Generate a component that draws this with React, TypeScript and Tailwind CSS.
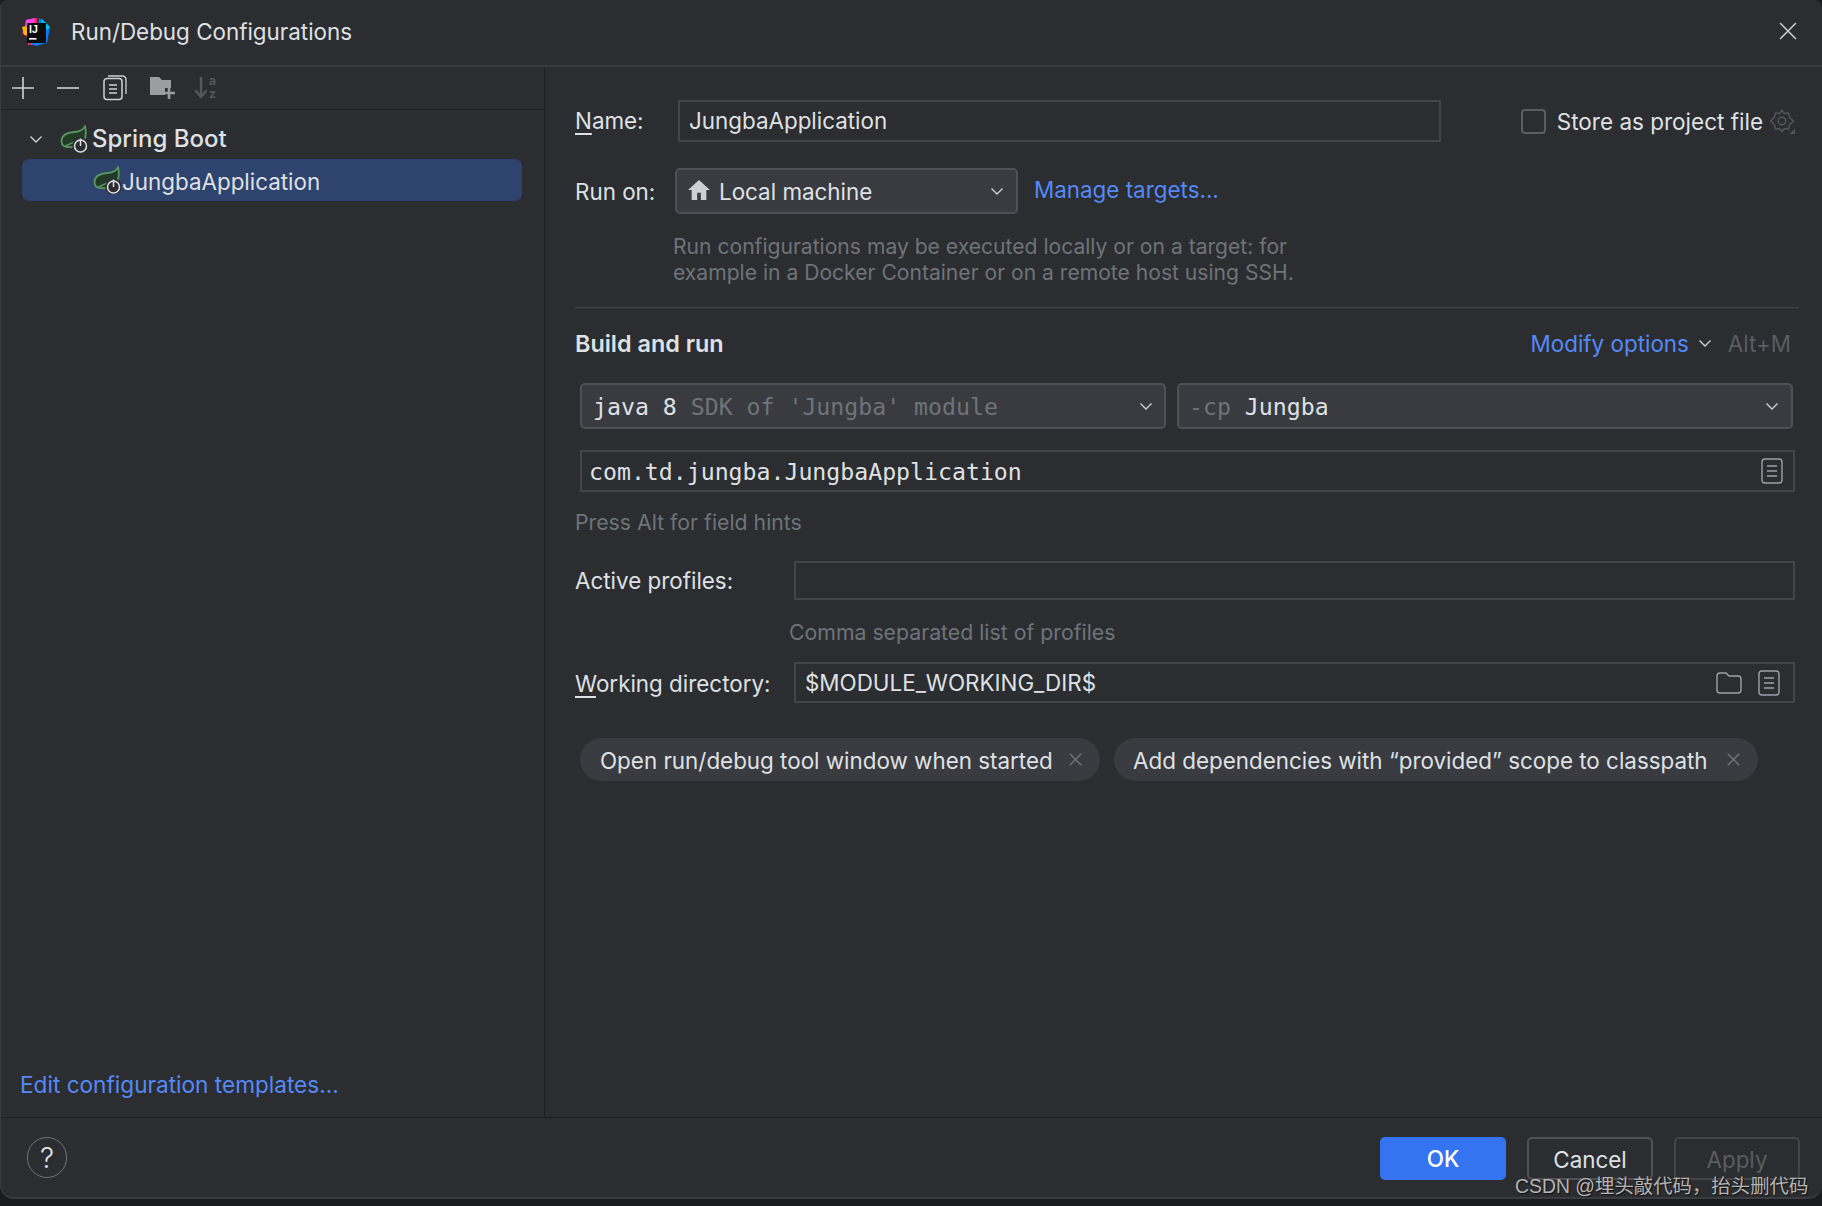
import React from 'react'

const uiFont = "font-['Inter','Liberation_Sans',sans-serif]"
const monoFont = "font-['DejaVu_Sans_Mono','Liberation_Mono',monospace]"

function Logo() {
  return (
    <svg width="30" height="32" viewBox="0 0 30 32" className="shrink-0">
      <polygon points="5,3 16,1 16,28 7,28 6,20 1,16 4,11" fill="#fe2857" />
      <polygon points="1,10 8,8 8,18 3,18" fill="#ffb300" />
      <polygon points="5,3 14,1 12,9 4,10" fill="#ff45ed" />
      <polygon points="18,1 29,10 26,26 15,29 8,26 16,16" fill="#087cfa" />
      <polygon points="20,1 29,10 24,14" fill="#07c3f2" />
      <rect x="6" y="6" width="19" height="20" fill="#0d0d0d" />
      <text x="8" y="16" fontSize="10.5" fontWeight="700" fill="#fff" fontFamily="Liberation Sans, sans-serif">IJ</text>
      <rect x="8" y="21" width="7.5" height="1.6" fill="#fff" />
    </svg>
  )
}

function SpringIcon() {
  return (
    <svg width="28" height="28" viewBox="0 0 28 28" fill="none" className="shrink-0">
      <path d="M25 1C23.5 5 20.5 6.5 14.5 7C7 7.6 1.5 10.5 1.5 16C1.5 19.5 4 21.8 7.5 22.2L15 22.2L25 14C26 9.5 26 5 25 1Z" fill="#233a27" stroke="#57965c" strokeWidth="1.8" strokeLinejoin="round" />
      <path d="M5 21.5C9 19 13 17.5 17 16" stroke="#57965c" strokeWidth="1.5" />
      <circle cx="20.5" cy="20.5" r="8.2" fill="#2b2d30" />
      <circle cx="20.5" cy="21" r="6" stroke="#dfe1e5" strokeWidth="1.5" />
      <path d="M20.5 13.5V21" stroke="#dfe1e5" strokeWidth="1.5" />
    </svg>
  )
}

function Chevron({ size = 16, color = '#ced0d6' }: { size?: number; color?: string }) {
  return (
    <svg width={size} height={size} viewBox="0 0 16 16" fill="none" className="shrink-0">
      <path d="M2.5 5.5L8 11L13.5 5.5" stroke={color} strokeWidth="1.4" />
    </svg>
  )
}

function DocIcon() {
  return (
    <svg width="22" height="26" viewBox="0 0 22 26" fill="none" className="shrink-0">
      <rect x="1" y="1" width="20" height="24" rx="3" stroke="#9da0a8" strokeWidth="1.4" />
      <path d="M6 8H16M6 13H16M6 18H16" stroke="#9da0a8" strokeWidth="1.6" />
    </svg>
  )
}

function CloseX({ size = 12, color = '#6f737a' }: { size?: number; color?: string }) {
  return (
    <svg width={size} height={size} viewBox="0 0 12 12" fill="none" className="shrink-0">
      <path d="M0.7 0.7L11.3 11.3M11.3 0.7L0.7 11.3" stroke={color} strokeWidth={size > 14 ? 1 : 1.3} />
    </svg>
  )
}

function Toolbar() {
  return (
    <div className="flex items-center h-[43px] border-b border-[#1e1f22]">
      <div className="w-[44px] flex justify-center">
        <svg width="24" height="24" viewBox="0 0 24 24" fill="none">
          <path d="M12 1V23M1 12H23" stroke="#ced0d6" strokeWidth="1.6" />
        </svg>
      </div>
      <div className="w-[46px] flex justify-center">
        <svg width="24" height="24" viewBox="0 0 24 24" fill="none">
          <path d="M1 12H23" stroke="#ced0d6" strokeWidth="1.6" />
        </svg>
      </div>
      <div className="w-[48px] flex justify-center">
        <svg width="24" height="26" viewBox="0 0 24 26" fill="none">
          <rect x="1" y="3.5" width="18" height="21" rx="3" stroke="#ced0d6" strokeWidth="1.5" />
          <path d="M6 10H14M6 14H14M6 18H14" stroke="#ced0d6" strokeWidth="1.5" />
          <path d="M5 1H19C21.5 1 23 2.5 23 5V19" stroke="#ced0d6" strokeWidth="1.3" />
        </svg>
      </div>
      <div className="w-[45px] flex justify-center">
        <svg width="26" height="24" viewBox="0 0 26 24" fill="none">
          <path d="M1 1H10L13 4H22V12H16V19H1Z" fill="#9c9d9f" />
          <path d="M20 11V23M14 17H26" stroke="#9c9d9f" strokeWidth="2.6" />
        </svg>
      </div>
      <div className="w-[46px] flex justify-center">
        <svg width="26" height="34" viewBox="0 -4 26 34" fill="none">
          <path d="M7 2V21M1.5 15.5L7 22L12.5 15.5" stroke="#55575b" strokeWidth="2.4" />
          <text x="15" y="10" fontSize="12" fontWeight="700" fill="#55575b" fontFamily="Inter, sans-serif">a</text>
          <text x="15" y="23" fontSize="12" fontWeight="700" fill="#55575b" fontFamily="Inter, sans-serif">z</text>
        </svg>
      </div>
    </div>
  )
}

function LeftPanel() {
  return (
    <div className="w-[544px] shrink-0 flex flex-col border-r border-[#1e1f22]">
      <Toolbar />
      <div className="mt-[9px] h-[40px] flex items-center pl-[27px]">
        <Chevron />
        <div className="ml-[16px]"><SpringIcon /></div>
        <span className="ml-[4px] text-[24px] font-medium text-[#dfe1e5]">Spring Boot</span>
      </div>
      <div className="ml-[21px] w-[500px] h-[42px] rounded-[7px] bg-[#2e436e] flex items-center pl-[71px]">
        <SpringIcon />
        <span className="text-[22.4px] ml-[1px] pt-[3px] text-[#dfe1e5]">JungbaApplication</span>
      </div>
      <div className="mt-auto pl-[19px] pb-[17px] text-[22.6px] leading-[30px] text-[#548af7]">Edit configuration templates...</div>
    </div>
  )
}

function Combo({ className, children }: { className: string; children: React.ReactNode }) {
  return (
    <div className={`h-[46px] rounded-[5px] border-2 border-[#4e5157] bg-[#393b40] flex items-center ${className}`}>
      {children}
    </div>
  )
}

function Chip({ label, className }: { label: string; className: string }) {
  return (
    <div className={`h-[43px] rounded-full bg-[#393b40] flex items-center justify-between text-[#dfe1e5] ${className}`}>
      <span className="whitespace-nowrap pt-[3px]">{label}</span>
      <CloseX size={13} />
    </div>
  )
}

function RightPanel() {
  return (
    <div className="flex-1 min-w-0 pl-[30px] pr-[27px] pt-[33px] text-[22.4px] text-[#dfe1e5]">
      <div className="flex items-center h-[42px]">
        <div className="w-[103px] shrink-0"><span className="underline underline-offset-4">N</span>ame:</div>
        <div className="w-[764px] h-[42px] border-2 border-[#43454a] pl-[9px] flex items-center">JungbaApplication</div>
        <div className="ml-[80px] w-[25px] h-[25px] rounded-[4px] border-2 border-[#5a5d63] mt-[1px]" />
        <span className="ml-[11px] whitespace-nowrap mt-[2px] text-[22.5px]">Store as project file</span>
        <svg width="26" height="26" viewBox="0 0 24 24" fill="none" className="ml-[6px]">
          <path d="M12 2L14 5L18 4.5L19 8.5L22.5 12L19 15.5L18 19.5L14 19L12 22L10 19L6 19.5L5 15.5L1.5 12L5 8.5L6 4.5L10 5Z" stroke="#55575b" strokeWidth="1.3" strokeLinejoin="round" />
          <circle cx="12" cy="12" r="3.5" stroke="#55575b" strokeWidth="1.3" />
          <path d="M24 19V24H19Z" fill="#55575b" />
        </svg>
      </div>

      <div className="flex items-center h-[46px] mt-[26px]">
        <div className="w-[100px] shrink-0 pt-[2px]">Run on:</div>
        <Combo className="w-[343px] pl-[10px] pr-[11px]">
          <svg width="24" height="22" viewBox="0 0 26 24" className="shrink-0 -mt-[3px]">
            <path d="M13 1L25 12H21V23H15V15H11V23H5V12H1Z" fill="#ced0d6" />
          </svg>
          <span className="ml-[8px] pt-[2px]">Local machine</span>
          <div className="ml-auto"><Chevron /></div>
        </Combo>
        <span className="ml-[16px] -mt-[2px] text-[#548af7]">Manage targets...</span>
      </div>

      <div className="mt-[20px] pl-[98px] text-[21.1px] leading-[26px] text-[#6f737a]">
        <div>Run configurations may be executed locally or on a target: for</div>
        <div>example in a Docker Container or on a remote host using SSH.</div>
      </div>

      <div className="mt-[21px] -mr-[4px] h-[1px] bg-[#43454a]" />

      <div className="mt-[17px] h-[36px] flex items-center">
        <span className="font-semibold text-[23.4px] pt-[2px]">Build and run</span>
        <span className="ml-auto pt-[2px] text-[#548af7]">Modify options</span>
        <div className="ml-[8px]"><Chevron color="#ced0d6" /></div>
        <span className="ml-[15px] mr-[4px] pt-[2px] text-[#5a5d63]">Alt+M</span>
      </div>

      <div className={`mt-[22px] ml-[5px] mr-[2px] flex gap-[11px] ${monoFont} text-[23.2px]`}>
        <Combo className="w-[586px] pl-[11px] pr-[10px] whitespace-pre">
          <span className="pt-[2px]">java 8 </span>
          <span className="pt-[2px] text-[#6f737a]">SDK of 'Jungba' module</span>
          <div className="ml-auto"><Chevron /></div>
        </Combo>
        <Combo className="flex-1 pl-[10px] pr-[11px] whitespace-pre">
          <span className="pt-[2px] text-[#6f737a]">-cp </span>
          <span className="pt-[2px]">Jungba</span>
          <div className="ml-auto"><Chevron /></div>
        </Combo>
      </div>

      <div className={`mt-[21px] ml-[5px] h-[42px] border-2 border-[#43454a] pl-[7px] pr-[10px] flex items-center justify-between ${monoFont} text-[23.2px]`}>
        <span className="pt-[2px]">com.td.jungba.JungbaApplication</span>
        <div className="-mt-[1px]"><DocIcon /></div>
      </div>

      <div className="mt-[15px] h-[30px] leading-[30px] text-[21.25px] text-[#6f737a]">Press Alt for field hints</div>

      <div className="mt-[24px] flex items-center h-[39px]">
        <div className="w-[219px] shrink-0">Active profiles:</div>
        <div className="flex-1 h-[39px] border-2 border-[#43454a]" />
      </div>

      <div className="mt-[17px] h-[30px] leading-[30px] pl-[214px] text-[21.25px] text-[#6f737a]">Comma separated list of profiles</div>

      <div className="mt-[15px] flex items-center h-[41px]">
        <div className="w-[219px] shrink-0 mt-[3px]"><span className="underline underline-offset-4">W</span>orking directory:</div>
        <div className="flex-1 h-[41px] border-2 border-[#43454a] pl-[9px] pr-[13px] flex items-center">
          <span>$MODULE_WORKING_DIR$</span>
          <svg width="26" height="24" viewBox="0 0 26 24" fill="none" className="ml-auto">
            <path d="M1 5C1 3 2 2 4 2H10L13 5H22C24 5 25 6 25 8V19C25 21 24 22 22 22H4C2 22 1 21 1 19Z" stroke="#9da0a8" strokeWidth="1.4" />
          </svg>
          <div className="ml-[16px]"><DocIcon /></div>
        </div>
      </div>

      <div className="mt-[35px] ml-[5px] flex gap-[14px]">
        <Chip label="Open run/debug tool window when started" className="w-[520px] pl-[20px] pr-[18px]" />
        <Chip label={'Add dependencies with \u201Cprovided\u201D scope to classpath'} className="w-[644px] pl-[19px] pr-[18px]" />
      </div>
    </div>
  )
}

function Footer() {
  return (
    <div className="relative h-[80px] shrink-0 border-t border-[#1e1f22] flex pl-[26px] pr-[22px] pt-[19px]">
      <div className="w-[40px] h-[41px] pt-[1px] rounded-full border border-[#6f737a] flex items-center justify-center text-[28px] font-light text-[#dfe1e5]">?</div>
      <div className="ml-auto flex gap-[21px] text-[22.4px]">
        <div className="w-[126px] h-[43px] pt-[1px] rounded-[5px] bg-[#3574f0] text-white font-medium flex items-center justify-center">OK</div>
        <div className="w-[126px] h-[43px] pt-[2px] rounded-[5px] border-2 border-[#4e5157] text-[#dfe1e5] flex items-center justify-center">Cancel</div>
        <div className="w-[126px] h-[43px] pt-[2px] rounded-[5px] border-2 border-[#43454a] text-[#5a5d63] flex items-center justify-center">Apply</div>
      </div>
      {/* watermark sits over the buttons */}
      <div className="absolute left-[1514px] top-[54px] whitespace-nowrap text-[19.4px] leading-[28px] text-[#b4b4b4] [text-shadow:1px_1px_1px_#111] font-['Liberation_Sans','Noto_Sans_CJK_SC',sans-serif]">
        CSDN @埋头敲代码，抬头删代码
      </div>
    </div>
  )
}

export default function App() {
  return (
    <div className={`w-[1822px] h-[1206px] bg-[#1b1c1e] overflow-hidden ${uiFont}`}>
      <div className="h-[1199px] rounded-b-[14px] rounded-t-[8px] border-l border-b-2 border-[#393b40] bg-[#2b2d30] flex flex-col">
        <div className="h-[67px] shrink-0 border-b-2 border-[#393b40] flex items-center pl-[20px] pr-[25px]">
          <Logo />
          <span className="ml-[20px] -mt-[2px] text-[22.4px] text-[#dfe1e5]">Run/Debug Configurations</span>
          <div className="ml-auto -mt-[4px]"><CloseX size={18} color="#ced0d6" /></div>
        </div>
        <div className="flex-1 min-h-0 flex">
          <LeftPanel />
          <RightPanel />
        </div>
        <Footer />
      </div>
    </div>
  )
}
